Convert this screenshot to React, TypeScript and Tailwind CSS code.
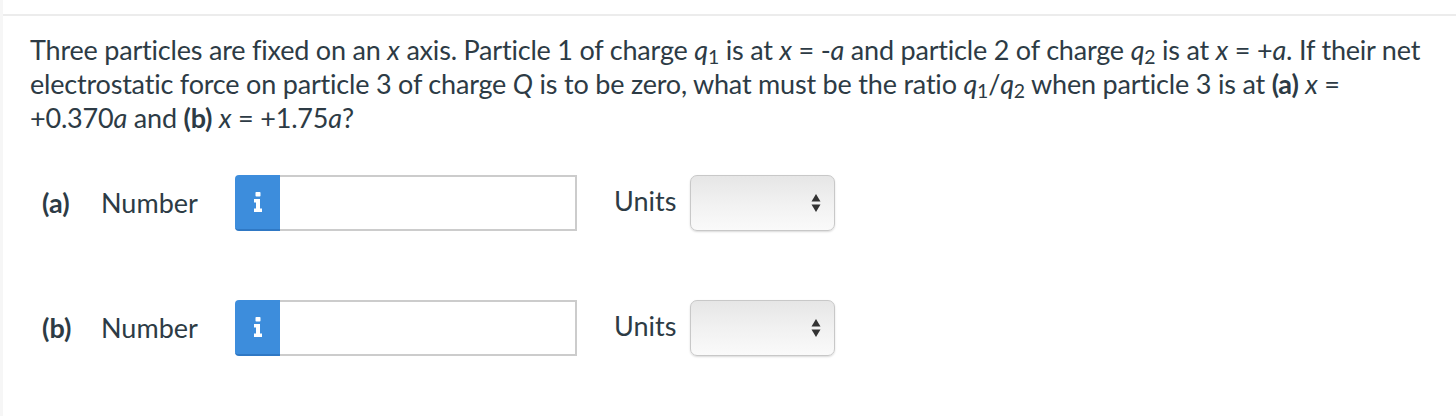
function Q({ n }: { n: string }) {
  return (
    <span className="italic">
      q<sub className="relative top-[0.2em] align-baseline text-[0.72em] leading-none not-italic">{n}</sub>
    </span>
  )
}

function AnswerRow({ part }: { part: string }) {
  return (
    <div className="flex items-center">
      <span className="ml-[12px] w-[59px] font-bold">({part})</span>
      <span className="w-[134px]">Number</span>
      <div className="flex h-[56px]">
        <div className="flex w-[45px] items-center justify-center rounded-l-[4px] border-b-2 border-[#2f78c4] bg-[#3d8ddc]">
          <svg width="10" height="20" viewBox="0 0 10 20">
            <rect x="2.5" y="0" width="5" height="4.5" rx="0.8" fill="#fff" />
            <path d="M1 7 H7 V16.5 H9 V20 H1 V16.5 H3 V10.5 H1 Z" fill="#fff" />
          </svg>
        </div>
        <div className="w-[297px] border-2 border-l-0 border-[#cccccc] bg-white" />
      </div>
      <span className="ml-[37px] -mt-[4px] w-[76px]">Units</span>
      <div className="flex h-[56px] w-[145px] items-center justify-end rounded-[7px] border border-[#c8c8c8] bg-gradient-to-b from-[#e6e6e6] via-[#f1f1f1] to-[#fafafa] pr-[13px] shadow-[0_1px_2px_rgba(0,0,0,0.15)]">
        <svg width="10" height="20" viewBox="0 0 10 20">
          <path d="M5 1 L9.5 8.5 L0.5 8.5 Z" fill="#333" />
          <path d="M5 19 L9.5 11.5 L0.5 11.5 Z" fill="#333" />
        </svg>
      </div>
    </div>
  )
}

export default function App() {
  return (
    <div className="h-[416px] w-[1456px] bg-white font-['Lato','Liberation_Sans',sans-serif] text-[27px] text-[#2d3b45]">
      <div className="flex h-full">
        <div className="w-[3px] bg-[#f6f6f6]" />
        <div className="flex-1">
          <div className="mt-[14px] h-[2px] bg-[#ececec]" />
          <div className="pl-[27px] pr-[20px] pt-[17px]">
            <p className="leading-[34px] tracking-[-0.2px]">
              Three particles are fixed on an <i>x</i> axis. Particle 1 of charge <Q n="1" /> is at <i>x</i> = -<i>a</i> and
              particle 2 of charge <Q n="2" /> is at <i>x</i> = +<i>a</i>. If their net electrostatic force on particle 3 of
              charge <i>Q</i> is to be zero, what must be the ratio <Q n="1" />/<Q n="2" /> when particle 3 is at{' '}
              <b>(a)</b> <i>x</i> = +0.370<i>a</i> and <b>(b)</b> <i>x</i> = +1.75<i>a</i>?
            </p>
            <div className="mt-[40px] flex flex-col gap-[69px]">
              <AnswerRow part="a" />
              <AnswerRow part="b" />
            </div>
          </div>
        </div>
      </div>
    </div>
  )
}
